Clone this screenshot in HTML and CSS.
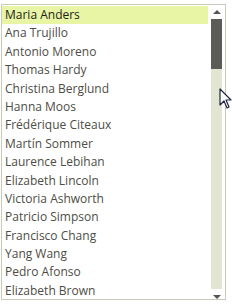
FILE: index.html
```html
<!DOCTYPE html>
<html lang="en">
<head>
    <meta charset="UTF-8">
    <title>ListBox</title>
    <link rel="stylesheet" href="styles.css">
</head>
<body>
<div class="listbox">
    <ul class="items">
        <li class="selected">Maria Anders</li>
        <li>Ana Trujillo</li>
        <li>Antonio Moreno</li>
        <li>Thomas Hardy</li>
        <li>Christina Berglund</li>
        <li>Hanna Moos</li>
        <li>Frédérique Citeaux</li>
        <li>Martín Sommer</li>
        <li>Laurence Lebihan</li>
        <li>Elizabeth Lincoln</li>
        <li>Victoria Ashworth</li>
        <li>Patricio Simpson</li>
        <li>Francisco Chang</li>
        <li>Yang Wang</li>
        <li>Pedro Afonso</li>
        <li>Elizabeth Brown</li>
        <li>Sven Ottlieb</li>
        <li>Janine Labrune</li>
    </ul>
    <div class="scrollbar">
        <div class="arrow up"></div>
        <div class="track"><div class="thumb"></div></div>
        <div class="arrow down"></div>
    </div>
</div>
<svg class="cursor" width="14" height="22" viewBox="0 0 14 22">
    <path d="M1 1 L1 17 L5 13 L8 20 L10 19 L7 12 L12 12 Z" fill="#fff" stroke="#1f2540" stroke-width="1.2" stroke-linejoin="round"/>
</svg>
</body>
</html>
```
FILE: styles.css
```css
html,body,ul{
    padding:0;
    margin:0;
}
body{
    background:#fff;
    font-family:"Open Sans","Noto Sans",sans-serif;
    font-size:12px;
    position:relative;
}
.listbox{
    margin:4px 0 0 1px;
    width:223px;
    height:294px;
    border:1px solid #c9cab9;
    display:flex;
    overflow:hidden;
}
.items{
    flex:1;
    list-style-type:none;
    padding-top:1px;
}
.items li{
    height:18.4px;
    line-height:18px;
    padding-left:3px;
    color:#4d4d45;
    white-space:nowrap;
}
.items li.selected{
    background:#e8f5a4;
    color:#1e1e1a;
}
.scrollbar{
    width:17px;
    display:flex;
    flex-direction:column;
    align-items:center;
}
.arrow{
    width:0;
    height:0;
    border-left:4px solid transparent;
    border-right:4px solid transparent;
}
.arrow.up{
    margin:5px 0 3px;
    border-bottom:4px solid #555650;
}
.arrow.down{
    margin:6px 0 0;
    border-top:4px solid #555650;
}
.track{
    width:11px;
    height:270px;
    margin-top:2px;
    background:#e3e5d3;
}
.thumb{
    height:50px;
    background:#5b5c55;
}
.cursor{
    position:absolute;
    left:219px;
    top:88px;
}
```
